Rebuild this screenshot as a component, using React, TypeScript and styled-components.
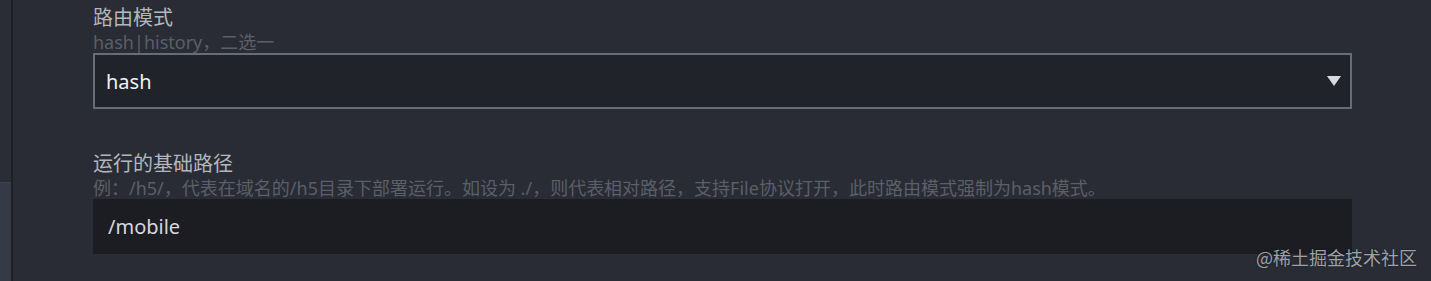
import React from "react";
import styled, { createGlobalStyle } from "styled-components";

const Global = createGlobalStyle`
  html, body { margin: 0; padding: 0; background: #292c35; }
  body { font-family: "Noto Sans", "Noto Sans CJK SC", sans-serif; }
  * { box-sizing: border-box; }
`;

const Page = styled.div`
  position: relative;
  display: flex;
  width: 1431px;
  height: 281px;
  overflow: hidden;
  background: #292c35;
`;

const Sidebar = styled.div`
  width: 13px;
  display: flex;
  flex-direction: column;
  border-right: 2px solid #1c1f26;
  background: #2a2d36;
`;

const SideTop = styled.div`
  height: 182px;
`;

const SideItem = styled.div`
  flex: 1;
  background: #343a46;
  border-top: 1px solid #3d4350;
`;

const Main = styled.div`
  flex: 1;
  padding: 4px 79px 0 80px;
  display: flex;
  flex-direction: column;
  gap: 41px;
`;

const Field = styled.div`
  display: flex;
  flex-direction: column;
`;

const Label = styled.div`
  font-family: "Noto Sans CJK SC", sans-serif;
  font-size: 20px;
  line-height: 26px;
  color: #b4b6bb;
`;

const Hint = styled.div`
  font-family: "Noto Sans", "Noto Sans CJK SC", sans-serif;
  font-size: 18px;
  line-height: 20px;
  margin-top: 2px;
  color: #5b5f67;
  white-space: nowrap;
`;

const SelectBox = styled.div`
  margin-top: 1px;
  height: 56px;
  border: 2px solid #686c76;
  background: #202329;
  display: flex;
  align-items: center;
  justify-content: space-between;
  padding: 0 9px 0 11px;
`;

const Value = styled.span<{ $light?: boolean }>`
  font-family: "Noto Sans", sans-serif;
  font-size: 20px;
  color: ${(p) => (p.$light ? "#f0f2f5" : "#d6d8dc")};
`;

const InputBox = styled.div`
  margin-top: 1px;
  height: 55px;
  background: #1b1d22;
  display: flex;
  align-items: center;
  padding: 0 15px;
`;

const Watermark = styled.div`
  position: absolute;
  right: 14px;
  bottom: 14px;
  font-family: "Noto Sans CJK SC", sans-serif;
  font-size: 18px;
  line-height: 20px;
  color: #9ea1a7;
  text-shadow: 0 0 2px rgba(0, 0, 0, 0.5);
`;

const Caret = () => (
  <svg width="14" height="10" viewBox="0 0 14 10">
    <polygon points="0,0 14,0 7,10" fill="#d8dadd" />
  </svg>
);

export default function App() {
  return (
    <>
      <Global />
      <Page>
        <Sidebar>
          <SideTop />
          <SideItem />
        </Sidebar>
        <Main>
          <Field>
            <Label>路由模式</Label>
            <Hint>hash|history，二选一</Hint>
            <SelectBox>
              <Value $light>hash</Value>
              <Caret />
            </SelectBox>
          </Field>
          <Field>
            <Label>运行的基础路径</Label>
            <Hint>例：/h5/，代表在域名的/h5目录下部署运行。如设为 ./，则代表相对路径，支持File协议打开，此时路由模式强制为hash模式。</Hint>
            <InputBox>
              <Value>/mobile</Value>
            </InputBox>
          </Field>
        </Main>
        <Watermark>@稀土掘金技术社区</Watermark>
      </Page>
    </>
  );
}
